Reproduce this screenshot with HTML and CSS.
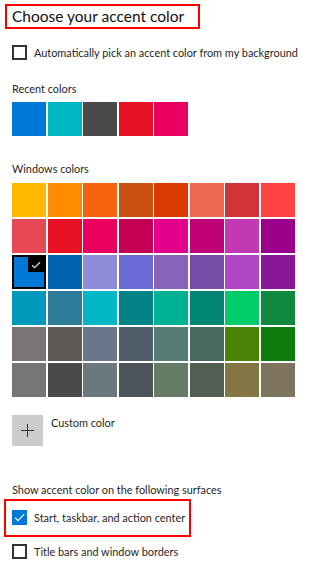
FILE: index.html
```html
<!DOCTYPE html>
<html lang="en">
<head>
    <meta charset="UTF-8">
    <meta name="viewport" content="width=device-width, initial-scale=1.0">
    <title>Colors</title>
    <link rel="stylesheet" href="styles.css">
</head>
<body>
    <section class="page">
        <div class="title-box">
            <h1>Choose your accent color</h1>
        </div>

        <label class="check-row auto-row">
            <span class="checkbox"></span>
            <span>Automatically pick an accent color from my background</span>
        </label>

        <div class="label recent-label">Recent colors</div>
        <div class="recent">
            <span class="swatch" style="background:#0078d7"></span>
            <span class="swatch" style="background:#00b7c3"></span>
            <span class="swatch" style="background:#4c4a48"></span>
            <span class="swatch" style="background:#e81123"></span>
            <span class="swatch" style="background:#ea005e"></span>
        </div>

        <div class="label windows-label">Windows colors</div>
        <div class="palette">
            <span class="swatch" style="background:#ffb900"></span>
            <span class="swatch" style="background:#ff8c00"></span>
            <span class="swatch" style="background:#f7630c"></span>
            <span class="swatch" style="background:#ca5010"></span>
            <span class="swatch" style="background:#da3b01"></span>
            <span class="swatch" style="background:#ef6950"></span>
            <span class="swatch" style="background:#d13438"></span>
            <span class="swatch" style="background:#ff4343"></span>

            <span class="swatch" style="background:#e74856"></span>
            <span class="swatch" style="background:#e81123"></span>
            <span class="swatch" style="background:#ea005e"></span>
            <span class="swatch" style="background:#c30052"></span>
            <span class="swatch" style="background:#e3008c"></span>
            <span class="swatch" style="background:#bf0077"></span>
            <span class="swatch" style="background:#c239b3"></span>
            <span class="swatch" style="background:#9a0089"></span>

            <span class="swatch selected" style="background:#0078d7">
                <span class="tick">
                    <svg width="10" height="8" viewBox="0 0 10 8"><path d="M1 4.2 L3.6 6.6 L9 1.2" fill="none" stroke="#d8d8d8" stroke-width="1.3"/></svg>
                </span>
            </span>
            <span class="swatch" style="background:#0063b1"></span>
            <span class="swatch" style="background:#8e8cd8"></span>
            <span class="swatch" style="background:#6b69d6"></span>
            <span class="swatch" style="background:#8764b8"></span>
            <span class="swatch" style="background:#744da9"></span>
            <span class="swatch" style="background:#b146c2"></span>
            <span class="swatch" style="background:#881798"></span>

            <span class="swatch" style="background:#0099bc"></span>
            <span class="swatch" style="background:#2d7d9a"></span>
            <span class="swatch" style="background:#00b7c3"></span>
            <span class="swatch" style="background:#038387"></span>
            <span class="swatch" style="background:#00b294"></span>
            <span class="swatch" style="background:#018574"></span>
            <span class="swatch" style="background:#00cc6a"></span>
            <span class="swatch" style="background:#10893e"></span>

            <span class="swatch" style="background:#7a7574"></span>
            <span class="swatch" style="background:#5d5a58"></span>
            <span class="swatch" style="background:#68768a"></span>
            <span class="swatch" style="background:#515c6b"></span>
            <span class="swatch" style="background:#567c73"></span>
            <span class="swatch" style="background:#486860"></span>
            <span class="swatch" style="background:#498205"></span>
            <span class="swatch" style="background:#107c10"></span>

            <span class="swatch" style="background:#767676"></span>
            <span class="swatch" style="background:#4c4a48"></span>
            <span class="swatch" style="background:#69797e"></span>
            <span class="swatch" style="background:#4a5459"></span>
            <span class="swatch" style="background:#647c64"></span>
            <span class="swatch" style="background:#525e54"></span>
            <span class="swatch" style="background:#847545"></span>
            <span class="swatch" style="background:#7e735f"></span>
        </div>

        <div class="custom-row">
            <span class="custom-btn">
                <svg width="13" height="13" viewBox="0 0 13 13"><path d="M6.5 0 V13 M0 6.5 H13" stroke="#333" stroke-width="1"/></svg>
            </span>
            <span class="custom-text">Custom color</span>
        </div>

        <div class="label surfaces-label">Show accent color on the following surfaces</div>

        <div class="highlight-box">
            <label class="check-row">
                <span class="checkbox checked">
                    <svg width="13" height="13" viewBox="0 0 13 13"><path d="M2 6.6 L5 9.6 L11.2 3.2" fill="none" stroke="#fff" stroke-width="1.2"/></svg>
                </span>
                <span>Start, taskbar, and action center</span>
            </label>
        </div>

        <label class="check-row title-bars-row">
            <span class="checkbox"></span>
            <span>Title bars and window borders</span>
        </label>
    </section>
</body>
</html>
```

FILE: styles.css
```css
body {
    font-family: Lato, "Liberation Sans", sans-serif;
    background-color: #ffffff;
    color: #1f1f1f;
    margin: 0;
    padding: 0;
    white-space: nowrap;
}

.page {
    padding: 4px 0 0 12px;
}

.title-box {
    display: inline-block;
    box-sizing: border-box;
    width: 195px;
    height: 25px;
    margin-left: -7px;
    border: 2px solid #ff0000;
    padding-left: 5px;
}

h1 {
    margin: 0;
    font-size: 15.5px;
    font-weight: 400;
    line-height: 21px;
    color: #111111;
}

.check-row {
    display: flex;
    align-items: center;
    gap: 7px;
    font-size: 10.9px;
    line-height: 15px;
}

.auto-row {
    margin-top: 16px;
}

.checkbox {
    box-sizing: border-box;
    width: 15px;
    height: 15px;
    flex: none;
    border: 2px solid #333333;
    display: flex;
    align-items: center;
    justify-content: center;
}

.checkbox.checked {
    background-color: #0078d7;
    border: none;
}

.label {
    font-size: 10.9px;
    line-height: 16px;
}

.recent-label {
    margin-top: 21px;
}

.recent {
    display: flex;
    gap: 1.5px;
    margin-top: 5px;
}

.swatch {
    display: block;
    width: 34px;
    height: 34px;
}

.windows-label {
    margin-top: 25px;
}

.palette {
    display: grid;
    grid-template-columns: repeat(8, 34px);
    grid-auto-rows: 34px;
    column-gap: 1.5px;
    row-gap: 2px;
    margin-top: 6px;
}

.selected {
    position: relative;
    box-sizing: border-box;
    border: 2px solid #000000;
}

.tick {
    position: absolute;
    top: 0;
    right: 0;
    width: 16px;
    height: 15px;
    background-color: #000000;
    display: flex;
    align-items: center;
    justify-content: center;
}

.custom-row {
    display: flex;
    align-items: flex-start;
    gap: 8px;
    margin-top: 18px;
}

.custom-btn {
    width: 31px;
    height: 31px;
    background-color: #cccccc;
    display: flex;
    align-items: center;
    justify-content: center;
}

.custom-text {
    font-size: 10.9px;
    line-height: 16px;
}

.surfaces-label {
    margin-top: 36px;
}

.highlight-box {
    box-sizing: border-box;
    width: 187px;
    height: 38px;
    margin: 1px 0 0 -8px;
    border: 2px solid #ff0000;
    padding: 9px 0 0 6px;
}

.title-bars-row {
    margin-top: 7px;
}
```
